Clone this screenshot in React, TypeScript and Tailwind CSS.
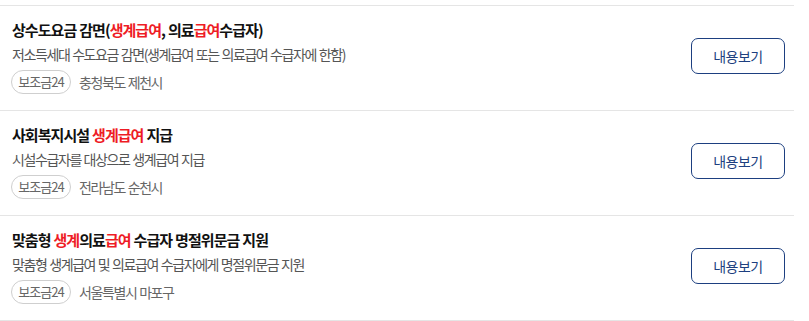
import React from 'react';

type Part = { text: string; red?: boolean };

type Item = {
    title: Part[];
    desc: string;
    source: string;
    region: string;
};

const items: Item[] = [
    {
        title: [
            { text: '상수도요금 감면(' },
            { text: '생계급여', red: true },
            { text: ', 의료' },
            { text: '급여', red: true },
            { text: '수급자)' },
        ],
        desc: '저소득세대 수도요금 감면(생계급여 또는 의료급여 수급자에 한함)',
        source: '보조금24',
        region: '충청북도 제천시',
    },
    {
        title: [
            { text: '사회복지시설 ' },
            { text: '생계급여', red: true },
            { text: ' 지급' },
        ],
        desc: '시설수급자를 대상으로 생계급여 지급',
        source: '보조금24',
        region: '전라남도 순천시',
    },
    {
        title: [
            { text: '맞춤형 ' },
            { text: '생계', red: true },
            { text: '의료' },
            { text: '급여', red: true },
            { text: ' 수급자 명절위문금 지원' },
        ],
        desc: '맞춤형 생계급여 및 의료급여 수급자에게 명절위문금 지원',
        source: '보조금24',
        region: '서울특별시 마포구',
    },
];

const App: React.FC = () => {
    return (
        <div
            className="bg-white w-[809px] h-[321px] pt-[5px] pr-[15px]"
            style={{ fontFamily: '"Noto Sans CJK KR", "Noto Sans", sans-serif' }}
        >
            <ul className="border-t border-[#e5e5e5]">
                {items.map((item, i) => (
                    <li
                        key={i}
                        className="flex items-center justify-between border-b border-[#e5e5e5] pl-[12px] pr-[9px] pt-[12px] pb-[16px]"
                    >
                        <div className="flex flex-col">
                            <h3 className="text-[15px] leading-[24px] font-bold text-[#111] tracking-[-0.95px] [word-spacing:0.5px]">
                                {item.title.map((p, j) => (
                                    <span key={j} className={p.red ? 'text-[#ee1c25]' : ''}>
                                        {p.text}
                                    </span>
                                ))}
                            </h3>
                            <p className="mt-[2px] text-[14px] leading-[20px] text-[#555] tracking-[-1.4px] [word-spacing:1px]">
                                {item.desc}
                            </p>
                            <div className="mt-[6px] flex items-center gap-[8px]">
                                <span className="h-[24px] w-[60px] -ml-px flex items-center justify-center rounded-full border border-[#cfcfcf] text-[13px] text-[#666] tracking-[-1px]">
                                    {item.source}
                                </span>
                                <span className="text-[14px] text-[#666] tracking-[-1.4px] [word-spacing:1px]">
                                    {item.region}
                                </span>
                            </div>
                        </div>
                        <button className="w-[94px] h-[36px] rounded-[7px] border border-[#1d3f80] text-[14px] text-[#1d3f80] bg-white tracking-[-0.5px]">
                            내용보기
                        </button>
                    </li>
                ))}
            </ul>
        </div>
    );
};

export default App;
